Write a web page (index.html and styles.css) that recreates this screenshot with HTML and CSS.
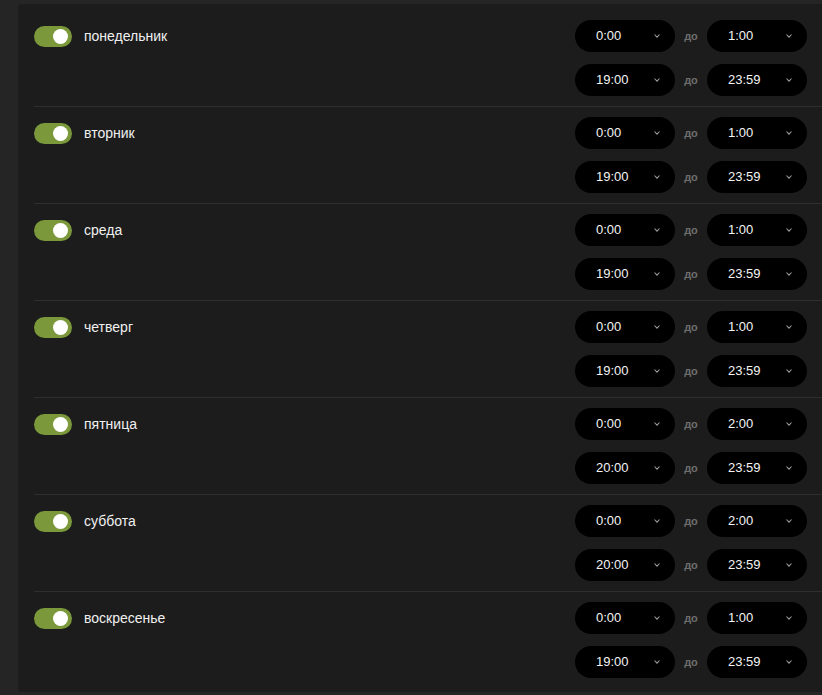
FILE: index.html
```html
<!DOCTYPE html>
<html lang="ru">
<head>
<meta charset="utf-8">
<link rel="stylesheet" href="styles.css">
</head>
<body>
<div class="panel">
  <div class="day">
    <div class="day-head"><span class="toggle"><span class="knob"></span></span><span class="day-name">понедельник</span></div>
    <div class="ranges">
      <div class="range"><div class="pill"><span>0:00</span><svg class="chev" viewBox="0 0 6 4"><path d="M0.5 0.5 L3 3.2 L5.5 0.5"/></svg></div><span class="to">до</span><div class="pill"><span>1:00</span><svg class="chev" viewBox="0 0 6 4"><path d="M0.5 0.5 L3 3.2 L5.5 0.5"/></svg></div></div>
      <div class="range"><div class="pill"><span>19:00</span><svg class="chev" viewBox="0 0 6 4"><path d="M0.5 0.5 L3 3.2 L5.5 0.5"/></svg></div><span class="to">до</span><div class="pill"><span>23:59</span><svg class="chev" viewBox="0 0 6 4"><path d="M0.5 0.5 L3 3.2 L5.5 0.5"/></svg></div></div>
    </div>
  </div>
  <div class="day">
    <div class="day-head"><span class="toggle"><span class="knob"></span></span><span class="day-name">вторник</span></div>
    <div class="ranges">
      <div class="range"><div class="pill"><span>0:00</span><svg class="chev" viewBox="0 0 6 4"><path d="M0.5 0.5 L3 3.2 L5.5 0.5"/></svg></div><span class="to">до</span><div class="pill"><span>1:00</span><svg class="chev" viewBox="0 0 6 4"><path d="M0.5 0.5 L3 3.2 L5.5 0.5"/></svg></div></div>
      <div class="range"><div class="pill"><span>19:00</span><svg class="chev" viewBox="0 0 6 4"><path d="M0.5 0.5 L3 3.2 L5.5 0.5"/></svg></div><span class="to">до</span><div class="pill"><span>23:59</span><svg class="chev" viewBox="0 0 6 4"><path d="M0.5 0.5 L3 3.2 L5.5 0.5"/></svg></div></div>
    </div>
  </div>
  <div class="day">
    <div class="day-head"><span class="toggle"><span class="knob"></span></span><span class="day-name">среда</span></div>
    <div class="ranges">
      <div class="range"><div class="pill"><span>0:00</span><svg class="chev" viewBox="0 0 6 4"><path d="M0.5 0.5 L3 3.2 L5.5 0.5"/></svg></div><span class="to">до</span><div class="pill"><span>1:00</span><svg class="chev" viewBox="0 0 6 4"><path d="M0.5 0.5 L3 3.2 L5.5 0.5"/></svg></div></div>
      <div class="range"><div class="pill"><span>19:00</span><svg class="chev" viewBox="0 0 6 4"><path d="M0.5 0.5 L3 3.2 L5.5 0.5"/></svg></div><span class="to">до</span><div class="pill"><span>23:59</span><svg class="chev" viewBox="0 0 6 4"><path d="M0.5 0.5 L3 3.2 L5.5 0.5"/></svg></div></div>
    </div>
  </div>
  <div class="day">
    <div class="day-head"><span class="toggle"><span class="knob"></span></span><span class="day-name">четверг</span></div>
    <div class="ranges">
      <div class="range"><div class="pill"><span>0:00</span><svg class="chev" viewBox="0 0 6 4"><path d="M0.5 0.5 L3 3.2 L5.5 0.5"/></svg></div><span class="to">до</span><div class="pill"><span>1:00</span><svg class="chev" viewBox="0 0 6 4"><path d="M0.5 0.5 L3 3.2 L5.5 0.5"/></svg></div></div>
      <div class="range"><div class="pill"><span>19:00</span><svg class="chev" viewBox="0 0 6 4"><path d="M0.5 0.5 L3 3.2 L5.5 0.5"/></svg></div><span class="to">до</span><div class="pill"><span>23:59</span><svg class="chev" viewBox="0 0 6 4"><path d="M0.5 0.5 L3 3.2 L5.5 0.5"/></svg></div></div>
    </div>
  </div>
  <div class="day">
    <div class="day-head"><span class="toggle"><span class="knob"></span></span><span class="day-name">пятница</span></div>
    <div class="ranges">
      <div class="range"><div class="pill"><span>0:00</span><svg class="chev" viewBox="0 0 6 4"><path d="M0.5 0.5 L3 3.2 L5.5 0.5"/></svg></div><span class="to">до</span><div class="pill"><span>2:00</span><svg class="chev" viewBox="0 0 6 4"><path d="M0.5 0.5 L3 3.2 L5.5 0.5"/></svg></div></div>
      <div class="range"><div class="pill"><span>20:00</span><svg class="chev" viewBox="0 0 6 4"><path d="M0.5 0.5 L3 3.2 L5.5 0.5"/></svg></div><span class="to">до</span><div class="pill"><span>23:59</span><svg class="chev" viewBox="0 0 6 4"><path d="M0.5 0.5 L3 3.2 L5.5 0.5"/></svg></div></div>
    </div>
  </div>
  <div class="day">
    <div class="day-head"><span class="toggle"><span class="knob"></span></span><span class="day-name">суббота</span></div>
    <div class="ranges">
      <div class="range"><div class="pill"><span>0:00</span><svg class="chev" viewBox="0 0 6 4"><path d="M0.5 0.5 L3 3.2 L5.5 0.5"/></svg></div><span class="to">до</span><div class="pill"><span>2:00</span><svg class="chev" viewBox="0 0 6 4"><path d="M0.5 0.5 L3 3.2 L5.5 0.5"/></svg></div></div>
      <div class="range"><div class="pill"><span>20:00</span><svg class="chev" viewBox="0 0 6 4"><path d="M0.5 0.5 L3 3.2 L5.5 0.5"/></svg></div><span class="to">до</span><div class="pill"><span>23:59</span><svg class="chev" viewBox="0 0 6 4"><path d="M0.5 0.5 L3 3.2 L5.5 0.5"/></svg></div></div>
    </div>
  </div>
  <div class="day">
    <div class="day-head"><span class="toggle"><span class="knob"></span></span><span class="day-name">воскресенье</span></div>
    <div class="ranges">
      <div class="range"><div class="pill"><span>0:00</span><svg class="chev" viewBox="0 0 6 4"><path d="M0.5 0.5 L3 3.2 L5.5 0.5"/></svg></div><span class="to">до</span><div class="pill"><span>1:00</span><svg class="chev" viewBox="0 0 6 4"><path d="M0.5 0.5 L3 3.2 L5.5 0.5"/></svg></div></div>
      <div class="range"><div class="pill"><span>19:00</span><svg class="chev" viewBox="0 0 6 4"><path d="M0.5 0.5 L3 3.2 L5.5 0.5"/></svg></div><span class="to">до</span><div class="pill"><span>23:59</span><svg class="chev" viewBox="0 0 6 4"><path d="M0.5 0.5 L3 3.2 L5.5 0.5"/></svg></div></div>
    </div>
  </div>
</div>
</body>
</html>
```
FILE: styles.css
```css
html, body {
  margin: 0;
  padding: 0;
  background: #252525;
  height: 100%;
  overflow: hidden;
}
body {
  padding: 4px 0 0 18px;
  box-sizing: border-box;
  font-family: "Liberation Sans", Arial, sans-serif;
}
.panel {
  background: #1c1c1c;
  border-radius: 4px 0 0 4px;
  padding: 6px 0 4px 16px;
}
.day {
  display: flex;
  justify-content: space-between;
  align-items: flex-start;
  padding: 10px 15px 10px 0;
  border-bottom: 1px solid #2e2e2e;
}
.day:last-child {
  border-bottom: none;
}
.day-head {
  display: flex;
  align-items: center;
  height: 32px;
  gap: 12px;
}
.toggle {
  position: relative;
  display: block;
  width: 38px;
  height: 21px;
  border-radius: 11px;
  background: #7b993a;
}
.knob {
  position: absolute;
  top: 3px;
  right: 4px;
  width: 15px;
  height: 15px;
  border-radius: 50%;
  background: #ffffff;
}
.day-name {
  color: #f0f0f0;
  font-size: 14px;
}
.ranges {
  display: flex;
  flex-direction: column;
  gap: 12px;
}
.range {
  display: flex;
  align-items: center;
}
.pill {
  width: 100px;
  height: 32px;
  box-sizing: border-box;
  border-radius: 16px;
  background: #000;
  display: flex;
  align-items: center;
  justify-content: space-between;
  padding: 0 15px 1px 21px;
  color: #f4f4f4;
  font-size: 13px;
  font-weight: normal;
}
.chev {
  width: 6px;
  height: 4px;
  fill: none;
  stroke: #9a9a9a;
  stroke-width: 1.1;
}
.to {
  width: 32px;
  text-align: center;
  color: #6e6e6e;
  font-size: 11px;
  font-weight: bold;
}
```
